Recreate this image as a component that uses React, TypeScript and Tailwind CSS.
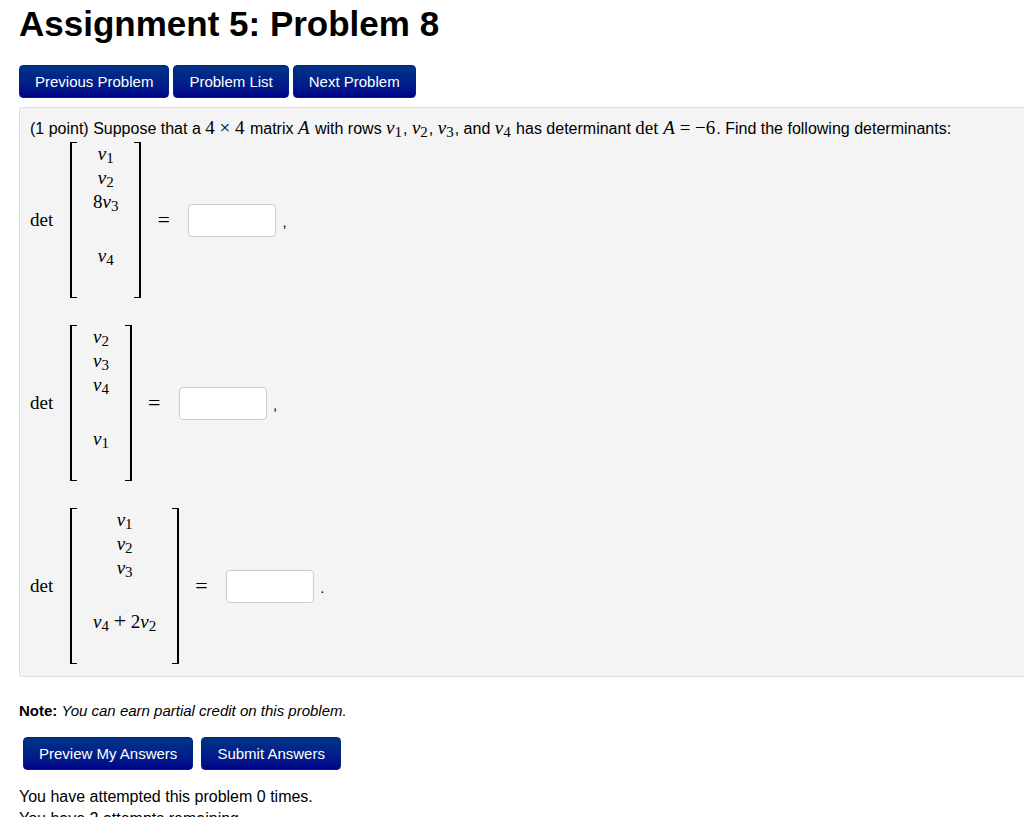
import { ReactNode } from "react";

type VecProps = {
  n: number;
};

type DeterminantProps = {
  id: string;
  rows: ReactNode[];
  end: string;
};

const buttonStyle =
  "h-[33px] cursor-pointer rounded border border-[#00257a] bg-linear-to-b from-[#003388] to-[#000088] px-[15px] text-[15px] leading-5 text-white";

const Vec = ({ n }: VecProps) => (
  <span className="font-['Liberation_Serif',serif] text-[19px] leading-5">
    <i>v</i>
    <sub className="bottom-[-3px] text-[15px]">{n}</sub>
  </span>
);

const MathText = ({ children }: { children: ReactNode }) => (
  <span className="font-['Liberation_Serif',serif] text-[19px] leading-5">{children}</span>
);

const Determinant = ({ id, rows, end }: DeterminantProps) => (
  <div className="flex items-center">
    <label htmlFor={id} className="w-10 font-['Liberation_Serif',serif] text-[19px]">
      det
    </label>
    <div className="flex">
      <div className="w-[7px] border-y border-l-2 border-black" />
      <div className="grid grid-rows-[24px_24px_24px_84px] items-center px-4 text-center">
        {rows.map((row, i) => (
          <div key={i}>{row}</div>
        ))}
      </div>
      <div className="w-[7px] border-y border-r-2 border-black" />
    </div>
    <span className="ml-4 w-[31px] font-['Liberation_Serif',serif] text-[22px]">=</span>
    <input
      id={id}
      type="text"
      className="h-[33px] w-[88px] rounded border border-[#cccccc] bg-white px-2 text-[15px] outline-none"
    />
    <span className="ml-[6px] pt-1 text-[15px]">{end}</span>
  </div>
);

const App = () => {
  return (
    <main className="overflow-hidden bg-white pl-[19px] font-['Liberation_Sans',Arial,sans-serif] text-[15px] leading-5 text-black">
      <h1 className="pt-1 text-[35px] leading-10 font-bold">Assignment 5: Problem 8</h1>

      <nav className="mt-[21px] flex gap-1">
        <button className={buttonStyle}>Previous Problem</button>
        <button className={buttonStyle}>Problem List</button>
        <button className={buttonStyle}>Next Problem</button>
      </nav>

      <section className="mt-[9px] rounded-l border border-r-0 border-[#dddddd] bg-[#f4f4f4] pt-[10px] pb-3 pl-[10px]">
        <p className="text-base leading-5 [&>span]:mr-px">
          (1 point) Suppose that a <MathText>4 × 4</MathText> matrix{" "}
          <MathText>
            <i>A</i>
          </MathText>{" "}
          with rows <Vec n={1} />, <Vec n={2} />, <Vec n={3} />, and <Vec n={4} /> has determinant{" "}
          <MathText>
            det <i>A</i> = −6
          </MathText>
          . Find the following determinants:
        </p>
        <div className="mt-[3px] flex flex-col gap-[27px]">
          <Determinant
            id="answer1"
            rows={[<Vec n={1} />, <Vec n={2} />, <><MathText>8</MathText><Vec n={3} /></>, <Vec n={4} />]}
            end=","
          />
          <Determinant
            id="answer2"
            rows={[<Vec n={2} />, <Vec n={3} />, <Vec n={4} />, <Vec n={1} />]}
            end=","
          />
          <Determinant
            id="answer3"
            rows={[
              <Vec n={1} />,
              <Vec n={2} />,
              <Vec n={3} />,
              <>
                <Vec n={4} />
                <MathText>
                  {" "}
                  <span className="text-[22px]">+</span> 2
                </MathText>
                <Vec n={2} />
              </>,
            ]}
            end="."
          />
        </div>
      </section>

      <p className="mt-6">
        <b>Note:</b> <i>You can earn partial credit on this problem.</i>
      </p>

      <div className="mt-4 flex gap-2 pl-1">
        <button className={buttonStyle}>Preview My Answers</button>
        <button className={buttonStyle}>Submit Answers</button>
      </div>

      <p className="mt-4 text-base leading-[22px]">
        You have attempted this problem 0 times.
        <br />
        You have 2 attempts remaining.
      </p>
    </main>
  );
};

export default App;
